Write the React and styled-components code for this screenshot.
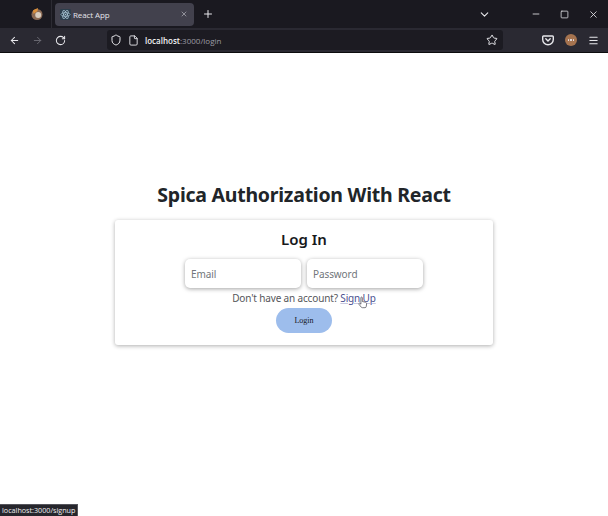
import React from 'react';
import styled, { createGlobalStyle } from 'styled-components';
import { ArrowLeft, ArrowRight, RotateCw, Shield, File, Star, ChevronDown, Minus, Square, X, Plus, Menu } from 'lucide-react';

const GlobalStyle = createGlobalStyle`
  html, body {
    margin: 0;
    padding: 0;
    background: #fff;
  }
  body {
    font-family: "Noto Sans", "Open Sans", sans-serif;
  }
`;

const Page = styled.div`
  position: relative;
  width: 608px;
  height: 516px;
  overflow: hidden;
  display: flex;
  flex-direction: column;
`;

const TabStrip = styled.div`
  height: 28px;
  background: #1a1920;
  display: flex;
  align-items: center;
  color: #e8e8ec;
`;

const Firefox = styled.div`
  width: 52px;
  height: 100%;
  display: flex;
  align-items: center;
  justify-content: flex-end;
  padding-right: 7px;
  border-right: 1px solid #2c2b33;
  box-sizing: border-box;
`;

const Tab = styled.div`
  width: 139px;
  height: 23px;
  margin-left: 3px;
  background: #42414d;
  border-radius: 4px;
  display: flex;
  align-items: center;
  padding: 0 6px 0 5px;
  box-sizing: border-box;
  gap: 2px;
  font-family: "Open Sans", sans-serif;
  font-size: 8px;
  letter-spacing: -0.1px;
  color: #e4e4ea;
`;

const TabTitle = styled.span`
  flex: 1;
`;

const NewTab = styled.div`
  margin-left: 8px;
  display: flex;
`;

const StripSpacer = styled.div`
  flex: 1;
`;

const WindowControls = styled.div`
  display: flex;
  align-items: center;
  gap: 19px;
  padding-right: 9px;
`;

const TabList = styled.div`
  display: flex;
  margin-right: 40px;
`;

const Toolbar = styled.div`
  height: 25px;
  box-sizing: border-box;
  background: #2a2932;
  display: flex;
  align-items: center;
  color: #e8e8ec;
  border-bottom: 1px solid #0c0c0e;
`;

const NavGroup = styled.div`
  display: flex;
  align-items: center;
  gap: 12px;
  padding-left: 9px;
  width: 107px;
  box-sizing: border-box;
`;

const UrlBar = styled.div`
  width: 396px;
  height: 20px;
  background: #1c1b22;
  border-radius: 3px;
  display: flex;
  align-items: center;
  padding: 0 5px 0 3px;
  box-sizing: border-box;
  gap: 6px;
`;

const UrlText = styled.span`
  flex: 1;
  font-family: "Open Sans", sans-serif;
  font-size: 8px;
  color: #9c9ca4;
`;

const UrlHost = styled.span`
  color: #f2f2f5;
  font-weight: 600;
`;

const ToolIcons = styled.div`
  flex: 1;
  display: flex;
  align-items: center;
  justify-content: flex-end;
  gap: 11px;
  padding-right: 9px;
`;

const Avatar = styled.div`
  width: 12px;
  height: 12px;
  border-radius: 50%;
  background: #a5734f;
  display: flex;
  align-items: center;
  justify-content: center;
  gap: 1px;
`;

const AvatarDot = styled.span`
  width: 1.5px;
  height: 1.5px;
  border-radius: 50%;
  background: #e6e6ee;
`;

const Content = styled.main`
  flex: 1;
  background: #fff;
  display: flex;
  flex-direction: column;
  align-items: center;
  padding-top: 128px;
`;

const Heading = styled.h1`
  margin: 0 0 11px;
  font-size: 19.5px;
  letter-spacing: -0.25px;
  line-height: 28px;
  font-weight: 700;
  color: #212529;
`;

const Card = styled.form`
  width: 378px;
  height: 125px;
  box-sizing: border-box;
  background: #fff;
  border-radius: 3px;
  box-shadow: 0 1px 4px rgba(0, 0, 0, 0.32);
  display: flex;
  flex-direction: column;
  align-items: center;
  padding-top: 8px;
`;

const CardTitle = styled.h2`
  margin: 0 0 8px;
  font-size: 15px;
  line-height: 23px;
  font-weight: 600;
  color: #17191c;
`;

const Fields = styled.div`
  display: flex;
  gap: 6px;
`;

const Field = styled.input`
  width: 116px;
  height: 29px;
  box-sizing: border-box;
  border: none;
  outline: none;
  border-radius: 5px;
  padding: 0 6px;
  font-family: inherit;
  font-size: 10px;
  letter-spacing: -0.1px;
  background: #fff;
  box-shadow: 0 1px 4px rgba(0, 0, 0, 0.36);

  &::placeholder {
    color: #71767b;
    opacity: 1;
  }
`;

const Prompt = styled.p`
  margin: 3px 0 2px;
  font-size: 10px;
  letter-spacing: -0.15px;
  line-height: 15px;
  color: #55565a;
`;

const SignUp = styled.a`
  color: #4a4f8f;
  text-decoration: underline;
  text-decoration-color: #c8c8e0;
`;

const LoginButton = styled.button`
  width: 56px;
  height: 25px;
  border: none;
  border-radius: 13px;
  background: #9dbdec;
  color: #14161d;
  font-family: "Liberation Serif", serif;
  font-size: 8px;
  padding: 0;
`;

const Pointer = styled.svg`
  position: absolute;
  left: 358px;
  top: 296px;
`;

const StatusBar = styled.div`
  position: absolute;
  left: 0;
  bottom: 0;
  height: 11px;
  padding: 0 2px;
  background: #26262c;
  border: 1px solid #55555c;
  border-left: none;
  border-bottom: none;
  color: #f0f0f2;
  font-family: "Open Sans", sans-serif;
  font-size: 7.2px;
  line-height: 11px;
`;

const FoxLogo = () => (
  <svg width="14" height="14" viewBox="0 0 14 14">
    <circle cx="7" cy="7.5" r="5.5" fill="#8a6a55" />
    <circle cx="8.2" cy="8" r="3" fill="#d9cdbf" />
    <path d="M3 3.5 C5 2 6.5 1.5 8 1 L7.5 4 L3.5 7 Z" fill="#d98f3c" />
  </svg>
);

const ReactLogo = () => (
  <svg width="11" height="11" viewBox="-12 -12 24 24" fill="none" stroke="#a9c7d6" strokeWidth="1.6">
    <rect x="-12" y="-12" width="24" height="24" rx="3" fill="#2c3e4c" stroke="none" />
    <ellipse rx="10" ry="4" />
    <ellipse rx="10" ry="4" transform="rotate(60)" />
    <ellipse rx="10" ry="4" transform="rotate(120)" />
    <circle r="1.8" fill="#a9c7d6" stroke="none" />
  </svg>
);

const PocketIcon = () => (
  <svg width="12" height="12" viewBox="0 0 12 12" fill="none" stroke="#e8e8ec" strokeWidth="1.4">
    <path d="M1.5 2h9a.8.8 0 0 1 .8.8V5.5a5.3 5.3 0 0 1-10.6 0V2.8A.8.8 0 0 1 1.5 2Z" />
    <path d="M3.8 4.8 6 7l2.2-2.2" strokeLinecap="round" />
  </svg>
);

const App = () => {
  return (
    <Page>
      <GlobalStyle />
      <TabStrip>
        <Firefox>
          <FoxLogo />
        </Firefox>
        <Tab>
          <ReactLogo />
          <TabTitle>React App</TabTitle>
          <X size={8} color="#b8b8c0" strokeWidth={2} />
        </Tab>
        <NewTab>
          <Plus size={12} strokeWidth={2} />
        </NewTab>
        <StripSpacer />
        <TabList>
          <ChevronDown size={13} strokeWidth={2} />
        </TabList>
        <WindowControls>
          <Minus size={10} strokeWidth={2} />
          <Square size={9} strokeWidth={2} />
          <X size={11} strokeWidth={1.8} />
        </WindowControls>
      </TabStrip>
      <Toolbar>
        <NavGroup>
          <ArrowLeft size={11} strokeWidth={2.2} />
          <ArrowRight size={11} strokeWidth={2} color="#6d6c75" />
          <RotateCw size={11} strokeWidth={2.2} />
        </NavGroup>
        <UrlBar>
          <Shield size={12} strokeWidth={2} />
          <File size={11} strokeWidth={2} />
          <UrlText>
            <UrlHost>localhost</UrlHost>:3000/login
          </UrlText>
          <Star size={12} strokeWidth={2} />
        </UrlBar>
        <ToolIcons>
          <PocketIcon />
          <Avatar>
            <AvatarDot />
            <AvatarDot />
            <AvatarDot />
          </Avatar>
          <Menu size={11} strokeWidth={2.2} />
        </ToolIcons>
      </Toolbar>
      <Content>
        <Heading>Spica Authorization With React</Heading>
        <Card onSubmit={(e) => e.preventDefault()}>
          <CardTitle>Log In</CardTitle>
          <Fields>
            <Field type="email" placeholder="Email" />
            <Field type="password" placeholder="Password" />
          </Fields>
          <Prompt>
            Don't have an account? <SignUp href="#signup">Sign Up</SignUp>
          </Prompt>
          <LoginButton type="submit">Login</LoginButton>
        </Card>
      </Content>
      <Pointer width="10" height="13" viewBox="0 0 10 13" fill="#fff" stroke="#55555f" strokeWidth="0.8">
        <path d="M3 1.2c.6-.5 1.3 0 1.3.7v3.6l3 .7c.9.2 1.4.9 1.3 1.8l-.4 2.7c-.1.6-.6 1-1.2 1H4.4c-.5 0-.9-.2-1.2-.6L.9 8.2c-.4-.6.4-1.4 1-.9l1 .9V1.9c0-.3 0-.5.1-.7Z" />
      </Pointer>
      <StatusBar>localhost:3000/signup</StatusBar>
    </Page>
  );
};

export default App;
